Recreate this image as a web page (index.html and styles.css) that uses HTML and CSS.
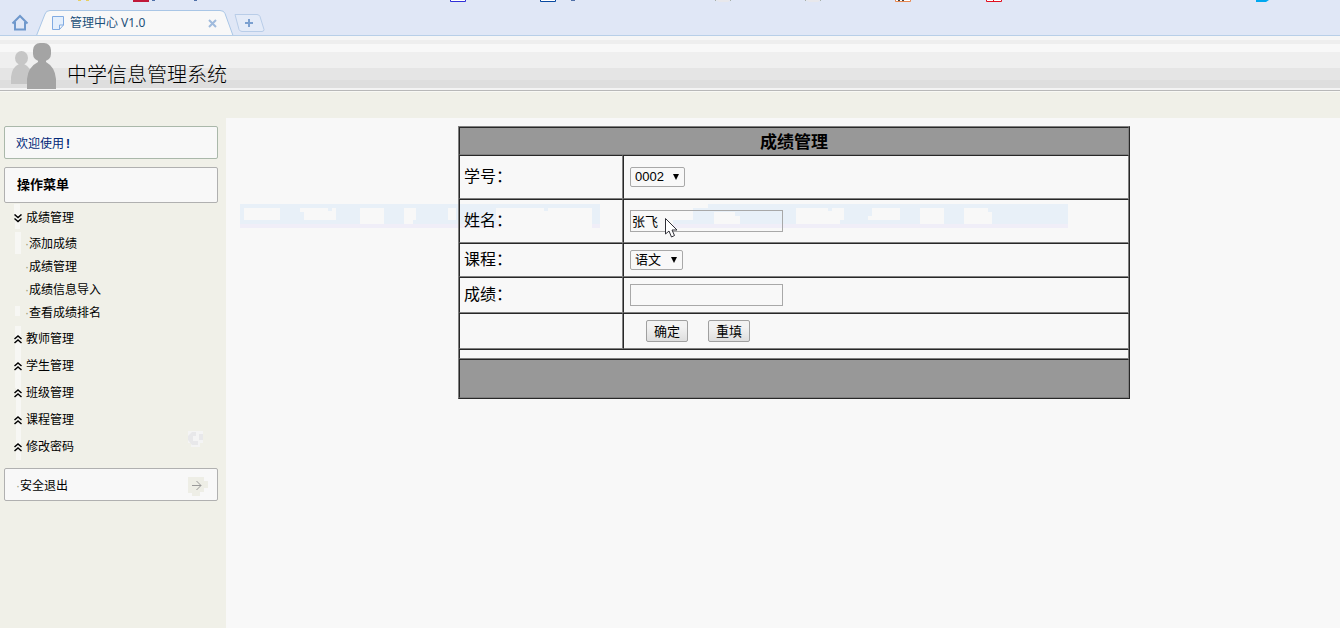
FILE: index.html
```html
<!DOCTYPE html>
<html lang="zh-CN">
<head>
<meta charset="utf-8">
<title>管理中心 V1.0</title>
<link rel="stylesheet" href="styles.css">
</head>
<body>
<nav class="tabbar">
  <svg class="bookmarks" width="1340" height="3" viewBox="0 0 1340 3" aria-hidden="true">
    <path fill="#e8cf60" d="M78 0h3v1h-3zM86 0h3v1h-3z"/>
    <path fill="#c01838" d="M133 0h16v2h-16z"/>
    <path fill="#5070a8" d="M152 0h3v1h-3zM194 0h3v1h-3zM571 0h4v1h-4z"/>
    <path fill="#fff" stroke="#3030d8" d="M450.500-1h15v2.500h-15z"/>
    <path fill="#fff" stroke="#0848a0" d="M540.500-1h15v2.500h-15z"/>
    <path fill="#e8e8ec" d="M716 0h15l-3 2h-9zM806 0h15l-3 2h-9z"/>
    <path fill="#a8b0a8" d="M715 0h1v1h-1zM730 0h1v1h-1zM805 0h1v1h-1zM820 0h1v1h-1z"/>
    <path fill="#fff" stroke="#e88850" d="M895.500-1h15v2.500h-15z"/>
    <path fill="#444" d="M898 0h2v1h-2zM902 0h2v1h-2z"/>
    <path fill="#fff" stroke="#e01020" d="M986.500-1h15v2.500h-15zM993.500 0v1"/>
    <path fill="#00a8f0" d="M1256 0h13l-3 2h-10z"/>
  </svg>
  <a class="home" href="#" aria-label="主页">
    <svg width="18" height="18" viewBox="0 0 18 18"><path fill="none" stroke="#6f98cc" stroke-width="2" d="M1.500 9.500L9 2l7.500 7.500M4 8v7.500h10V8"/></svg>
  </a>
  <div class="tab">
    <svg class="tab-shape" width="202" height="27" viewBox="0 0 202 27"><path fill="#f8f8f8" stroke="#a9c6e6" d="M-2.500 25.500h2L8 4Q9 .5 13 .5h170q4 0 5 3l8 22h6"/></svg>
    <svg class="page-icon" width="12" height="14" viewBox="0 0 12 14"><path fill="#e4effc" stroke="#80abe2" d="M.5.5h11v8.500l-4 4.500h-7zM11.500 9h-4v4.500"/></svg>
    <span class="tab-title">管理中心 V1.0</span>
    <button class="close" type="button" aria-label="关闭">
      <svg width="9" height="9" viewBox="0 0 9 9"><path stroke="#a0bbdd" stroke-width="2" d="M1 1l7 7M8 1L1 8"/></svg>
    </button>
  </div>
  <button class="newtab" type="button" aria-label="新建标签页">
    <svg width="31" height="20" viewBox="0 0 31 20"><path fill="#e4ebf8" stroke="#b9cde8" d="M1 1.500h22q2 0 3 2l4 13q0 2-2 2H8q-2 0-3-2z"/><path stroke="#7ba0d0" stroke-width="2" d="M11 10h8M15 6v8"/></svg>
  </button>
</nav>
<header class="header">
  <svg class="people" width="46" height="48" viewBox="0 0 46 48" aria-hidden="true">
    <ellipse cx="10.500" cy="16" rx="6.500" ry="7" fill="#c6c6c6"/>
    <path fill="#c6c6c6" d="M0 42V35Q1 25 8 22h5q7 3 8 13v7z"/>
    <rect x="22" y="1" width="18" height="18" rx="7" fill="#a4a4a4"/>
    <path fill="#a4a4a4" d="M27 17h8v3q9 5 10 17v10H16V37q1-12 11-17z"/>
  </svg>
  <h1 class="brand">中学信息管理系统</h1>
</header>
<div class="layout">
  <aside class="sidebar">
    <div class="box welcome">欢迎使用<b>!</b></div>
    <h2 class="box menu-title">操作菜单</h2>
    <ul class="menu">
      <li><a class="group" href="#"><svg width="8" height="9" viewBox="0 0 8 9"><path d="M.5.5L4 3.500 7.500.5M.5 4.500L4 7.500l3.500-3"/></svg>成绩管理</a>
        <ul class="submenu">
          <li><a href="#">添加成绩</a></li>
          <li><a href="#">成绩管理</a></li>
          <li><a href="#">成绩信息导入</a></li>
          <li><a href="#">查看成绩排名</a></li>
        </ul>
      </li>
      <li><a class="group" href="#"><svg width="8" height="9" viewBox="0 0 8 9"><path d="M.5 4L4 1l3.500 3M.5 8L4 5l3.500 3"/></svg>教师管理</a></li>
      <li><a class="group" href="#"><svg width="8" height="9" viewBox="0 0 8 9"><path d="M.5 4L4 1l3.500 3M.5 8L4 5l3.500 3"/></svg>学生管理</a></li>
      <li><a class="group" href="#"><svg width="8" height="9" viewBox="0 0 8 9"><path d="M.5 4L4 1l3.500 3M.5 8L4 5l3.500 3"/></svg>班级管理</a></li>
      <li><a class="group" href="#"><svg width="8" height="9" viewBox="0 0 8 9"><path d="M.5 4L4 1l3.500 3M.5 8L4 5l3.500 3"/></svg>课程管理</a></li>
      <li><a class="group" href="#"><svg width="8" height="9" viewBox="0 0 8 9"><path d="M.5 4L4 1l3.500 3M.5 8L4 5l3.500 3"/></svg>修改密码</a></li>
    </ul>
    <a class="box logout" href="#"><span class="dotted">安全退出</span>
      <svg width="20" height="20" viewBox="0 0 20 20"><path fill="#eeeee6" d="M0 1h16v4h4v7h-4v4h-4v4H4v-3H0z"/><path fill="none" stroke="#999" d="M4 9.500h9M8.500 5l4.500 4.500L8.500 14"/></svg>
    </a>
    <svg class="ghost" width="18" height="16" viewBox="0 0 18 16" aria-hidden="true"><path fill="#f4f4f4" d="M1 0h15v12h-3v4H4v-4H1z"/><path fill="#e8e8ea" d="M5 1h4v4H6v5h5v4H5l-4-5V5zM12 3h4v6h-4z"/></svg>
    <svg class="streak" width="8" height="256" viewBox="0 0 8 256" aria-hidden="true"><path fill="#f7f7f4" d="M0 0h6v25H1V12H0zM1 28h6v22H1zM1 102h5v10H1zM1 122h6v134H2v-72H1z"/></svg>
  </aside>
  <main class="content">
    <svg class="band" width="828" height="24" viewBox="0 0 828 24" aria-hidden="true">
      <path fill="#e8f0f8" d="M0 0h828v20H0z"/>
      <path fill="#f0eef8" d="M0 20h828v4H0z"/>
      <path fill="#f8f8f8" d="M4 4h36v12H4zM60 4h28v3h4V4h4v12H64V8h-4zM120 4h24v16h-24zM164 4h12v12h-3v4h-9zM208 4h8v12h-8zM256 4h48v3h4V4h44v20h-92V16h-4zM360 0h108v4h-15v12h-20v8h-73zM474 8h21v4h5v8h-26zM556 4h32v3h4V4h12v12h-4v4h-44zM632 4h28v12h-32v-4h4zM680 4h24v16h-24zM724 4h24v4h4v12h-28z"/>
    </svg>
    <form class="form" onsubmit="return false">
      <table class="grid">
        <colgroup><col class="col-label"><col></colgroup>
        <thead><tr class="row-head"><th colspan="2">成绩管理</th></tr></thead>
        <tbody>
          <tr class="row-tall"><td><label for="sid">学号：</label></td><td class="field"><span class="pick"><select id="sid"><option>0002</option></select></span></td></tr>
          <tr class="row-tall"><td><label for="name">姓名：</label></td><td class="field"><input id="name" type="text" value="张飞"></td></tr>
          <tr class="row-short"><td><label for="course">课程：</label></td><td class="field"><span class="pick"><select id="course"><option>语文</option></select></span></td></tr>
          <tr class="row-mid"><td><label for="score">成绩：</label></td><td class="field"><input id="score" type="text"></td></tr>
          <tr class="row-mid"><td></td><td class="field"><div class="actions"><button class="btn" type="submit">确定</button><button class="btn" type="reset">重填</button></div></td></tr>
          <tr class="row-gap"><td colspan="2"></td></tr>
        </tbody>
        <tfoot><tr class="row-foot"><td colspan="2"></td></tr></tfoot>
      </table>
      <svg class="cursor" width="13" height="20" viewBox="0 0 13 20" aria-hidden="true"><path fill="#fff" stroke="#303038" d="M.5.5v15.500l3.500-3 2.500 6 3-1.500L7 12h5z"/></svg>
    </form>
  </main>
</div>
</body>
</html>
```
FILE: styles.css
```css
* { box-sizing: border-box; }
body {
  margin: 0;
  min-height: 100vh;
  display: flex;
  flex-direction: column;
  background: #f0f0e8;
  color: #000;
  font: 12px/16px "Liberation Sans", "Noto Sans CJK SC", sans-serif;
}
a { color: inherit; text-decoration: none; }
ul { list-style: none; margin: 0; padding: 0; }
button { font: inherit; }

.tabbar {
  position: relative;
  display: flex;
  align-items: flex-end;
  height: 36px;
  overflow: hidden;
  background: #e0e7f6;
  border-bottom: 1px solid #b8cfe8;
}
.bookmarks { position: absolute; top: 0; left: 0; }
.home { width: 37px; height: 21px; padding-left: 11px; }
.tab {
  position: relative;
  display: flex;
  align-items: center;
  width: 202px;
  height: 25px;
  padding: 1px 22px 0 15px;
}
.tab-shape { position: absolute; left: 0; top: 0; overflow: visible; }
.page-icon, .tab-title, .close { position: relative; }
.tab-title { flex: 1; margin-left: 6px; color: #1c5078; font-family: "Noto Sans", "Noto Sans CJK SC", sans-serif; }
.close, .newtab { display: flex; padding: 0; border: 0; background: none; }
.newtab { margin: 0 0 2px -5px; }

.header {
  display: flex;
  align-items: flex-end;
  gap: 10px;
  height: 56px;
  padding: 0 0 1px 11px;
  border-bottom: 1px solid #f8f8f4;
  background: linear-gradient(#f6f6f6 4px, #eee 4px 8px, #f8f8f8 8px 16px, #efefef 16px 32px, #e5e5e5 32px 44px, #dedede 44px 52px, #f4f4f4 52px 54px, #b8b8b8 54px);
}
.brand { margin: 0; padding-bottom: 2px; font: 300 20px/28px "Noto Sans CJK SC", sans-serif; }

.layout { flex: 1; display: flex; padding-top: 26px; }
.sidebar { position: relative; width: 226px; padding: 8px 8px 8px 4px; }
.box {
  display: flex;
  align-items: center;
  height: 33px;
  margin: 0 0 8px;
  padding: 2px 11px 0;
  border: 1px solid #b0b0b0;
  border-radius: 2px;
  background: #f8f8f8;
}
.welcome { border-color: #aab8aa; color: #002878; }
.welcome b { margin-left: 2px; }
.menu-title { height: 36px; margin-bottom: 1px; padding: 0 12px; font-size: 13px; font-weight: 700; }
.menu { position: relative; z-index: 1; margin-bottom: 8px; }
.group { display: flex; align-items: center; gap: 4px; height: 27px; padding: 1px 0 0 10px; }
.group svg { fill: none; stroke: #000; stroke-width: 1.5; }
.submenu { padding-top: 2px; }
.submenu a { display: block; padding-left: 21px; line-height: 23px; }
.submenu a::before, .dotted::before { content: "·"; color: #9a9a78; }
.logout { justify-content: space-between; padding-right: 9px; }
.ghost { position: absolute; left: 187px; top: 313px; }
.streak { position: absolute; left: 14px; top: 86px; }

.content {
  position: relative;
  flex: 1;
  min-width: 0;
  padding: 8px 0 0 22px;
  background: #f8f8f8;
}
.band { position: absolute; left: 14px; top: 86px; }
.form { position: relative; width: 672px; max-width: 100%; margin: 0 auto; }
.grid {
  width: 100%;
  border: 1px solid #808080;
  border-right-color: #282828;
  border-bottom-color: #282828;
  border-spacing: 0;
  table-layout: fixed;
  font: 16px/20px "Noto Sans CJK SC", sans-serif;
}
.col-label { width: 164px; }
.grid th, .grid td {
  padding: 0 4px 4px;
  border: 1px solid #282828;
  border-right-color: #808080;
  border-bottom-color: #808080;
}
.grid .field { padding: 0 6px; }
.row-head { height: 28px; }
.row-tall { height: 44px; }
.row-short { height: 34px; }
.row-mid { height: 36px; }
.grid .row-gap { height: 10px; }
.row-foot { height: 39px; }
.row-head th, .row-foot td { background: #989898; }
.grid .row-head th { padding-bottom: 1px; font-size: 17px; }

.pick { position: relative; display: flex; width: max-content; }
.pick::after {
  content: "";
  position: absolute;
  right: 6px;
  top: 7px;
  border: 3px solid transparent;
  border-top: 6px solid #000;
  border-bottom: 0;
  pointer-events: none;
}
select {
  appearance: none;
  height: 20px;
  padding: 0 20px 0 4px;
  border: 1px solid #a8a8a8;
  border-radius: 2px;
  background: #f8f8f8;
  color: #000;
  font: 13px/18px "Liberation Sans", "Noto Sans CJK SC", sans-serif;
}
.field input {
  display: block;
  width: 153px;
  height: 22px;
  padding: 0 1px 2px;
  border: 1px solid #a8a8a8;
  background: transparent;
  color: #000;
  font: 13px/20px "Noto Sans CJK SC", sans-serif;
}
.actions { display: flex; gap: 20px; padding-left: 16px; }
.btn {
  width: 42px;
  height: 22px;
  padding: 0;
  border: 1px solid #a0a0a0;
  border-radius: 2px;
  background: linear-gradient(#f2f2f2 30%, #dedede);
  font: 13px/18px "Noto Sans CJK SC", sans-serif;
}
.cursor { position: absolute; left: 207px; top: 92px; }
```
